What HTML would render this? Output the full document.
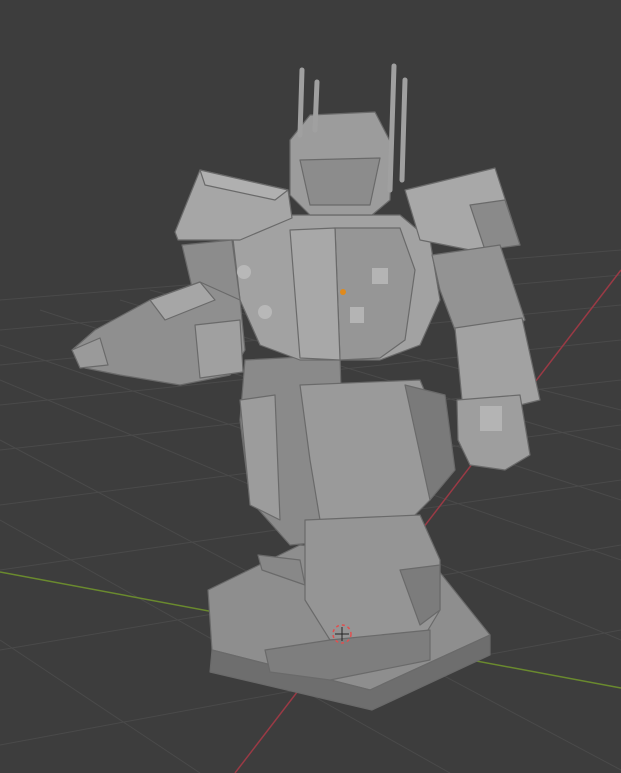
<!DOCTYPE html>
<html><head><meta charset="utf-8"><style>html,body{margin:0;padding:0;background:#3d3d3d;}svg{display:block}</style></head><body>
<svg width="621" height="773" viewBox="0 0 621 773" xmlns="http://www.w3.org/2000/svg">
<rect width="621" height="773" fill="#3d3d3d"/>
<g stroke="#4a4a4a" stroke-width="1" fill="none">
<line x1="0" y1="300" x2="621" y2="250"/>
<line x1="0" y1="330" x2="621" y2="275"/>
<line x1="0" y1="365" x2="621" y2="305"/>
<line x1="0" y1="405" x2="621" y2="340"/>
<line x1="0" y1="450" x2="621" y2="380"/>
<line x1="0" y1="505" x2="621" y2="425"/>
<line x1="0" y1="570" x2="621" y2="480"/>
<line x1="0" y1="650" x2="621" y2="545"/>
<line x1="0" y1="745" x2="621" y2="630"/>
<line x1="0" y1="440" x2="621" y2="770"/>
<line x1="0" y1="380" x2="621" y2="640"/>
<line x1="0" y1="345" x2="621" y2="560"/>
<line x1="40" y1="310" x2="621" y2="500"/>
<line x1="120" y1="300" x2="621" y2="450"/>
<line x1="0" y1="520" x2="450" y2="773"/>
<line x1="0" y1="640" x2="200" y2="773"/>
<line x1="150" y1="290" x2="621" y2="410"/>
</g>
<line x1="0" y1="572" x2="621" y2="688" stroke="#6a8a2e" stroke-width="1.5"/>
<line x1="235" y1="773" x2="621" y2="270" stroke="#9a3a45" stroke-width="1.5"/>
<g stroke="#6a6a6a" stroke-width="1.2" stroke-linejoin="round">
<!-- base -->
<polygon points="208,590 300,545 430,560 490,635 370,690 212,650" fill="#8e8e8e"/>
<polygon points="212,650 370,690 490,635 490,655 372,710 210,672" fill="#6e6e6e"/>
<!-- back leg -->
<polygon points="245,360 340,355 345,540 290,545 250,500 240,420" fill="#8a8a8a"/>
<polygon points="240,400 275,395 280,520 250,505" fill="#9c9c9c"/>
<!-- front knee and lower leg -->
<polygon points="300,385 420,380 445,440 430,500 405,525 320,520 310,460" fill="#9a9a9a"/>
<polygon points="405,385 445,395 455,470 430,500" fill="#7a7a7a"/>
<polygon points="305,520 420,515 440,560 440,610 425,635 330,640 305,600" fill="#959595"/>
<polygon points="400,570 440,565 440,610 420,625" fill="#7c7c7c"/>
<polygon points="265,650 330,640 430,630 430,660 330,680 270,672" fill="#7e7e7e"/>
<polygon points="258,555 300,560 305,585 262,570" fill="#888"/>
<!-- torso -->
<polygon points="232,230 290,215 400,215 430,240 440,300 420,345 380,360 300,360 260,345 240,300" fill="#a2a2a2"/>
<polygon points="335,228 400,228 415,270 405,340 380,358 340,360" fill="#969696"/>
<polygon points="290,230 335,228 340,360 300,358" fill="#a8a8a8"/>
<!-- head -->
<polygon points="290,140 310,115 375,112 392,145 390,200 372,215 310,215 290,195" fill="#9c9c9c"/>
<polygon points="300,160 380,158 370,205 310,205" fill="#8c8c8c"/>
</g>
<g stroke="#a0a0a0" stroke-width="5" stroke-linecap="round">
<line x1="302" y1="70" x2="300" y2="135"/><line x1="317" y1="82" x2="315" y2="130"/>
<line x1="394" y1="66" x2="390" y2="190"/><line x1="405" y1="80" x2="402" y2="180"/>
</g>
<g stroke="#6a6a6a" stroke-width="1.2" stroke-linejoin="round">
<polygon points="175,232 200,170 288,190 292,218 240,240 178,240" fill="#a6a6a6"/>
<polygon points="200,170 288,190 275,200 205,185" fill="#b0b0b0"/>
<polygon points="405,190 495,168 520,245 470,250 420,240" fill="#a8a8a8"/>
<polygon points="470,205 505,200 520,245 485,250" fill="#8a8a8a"/>
<polygon points="432,255 500,245 525,320 510,330 455,330 440,290" fill="#939393"/>
<polygon points="455,328 522,318 540,400 520,405 462,400" fill="#a2a2a2"/>
<polygon points="457,400 520,395 530,455 505,470 470,465 458,440" fill="#9e9e9e"/>
<polygon points="182,245 232,240 240,300 195,300" fill="#8c8c8c"/>
<polygon points="72,350 95,330 150,300 200,282 240,300 245,350 230,375 180,385 120,375 85,368" fill="#8f8f8f"/>
<polygon points="150,300 200,282 215,300 165,320" fill="#a6a6a6"/>
<polygon points="195,325 240,320 243,372 200,378" fill="#a0a0a0"/>
<polygon points="72,350 100,338 108,365 80,368" fill="#9a9a9a"/>
</g>
<g fill="#b4b4b4">
<rect x="372" y="268" width="16" height="16"/><rect x="350" y="307" width="14" height="16"/>
<rect x="480" y="406" width="22" height="25"/>
</g>
<circle cx="244" cy="272" r="7" fill="#b8b8b8"/><circle cx="265" cy="312" r="7" fill="#b8b8b8"/>
<circle cx="343" cy="292" r="3" fill="#e08a1c"/>
<circle cx="342" cy="634" r="9" fill="none" stroke="#e05050" stroke-width="1.5" stroke-dasharray="3,3"/>
<line x1="335" y1="634" x2="349" y2="634" stroke="#222"/><line x1="342" y1="627" x2="342" y2="641" stroke="#222"/>
</svg>
</body></html>
